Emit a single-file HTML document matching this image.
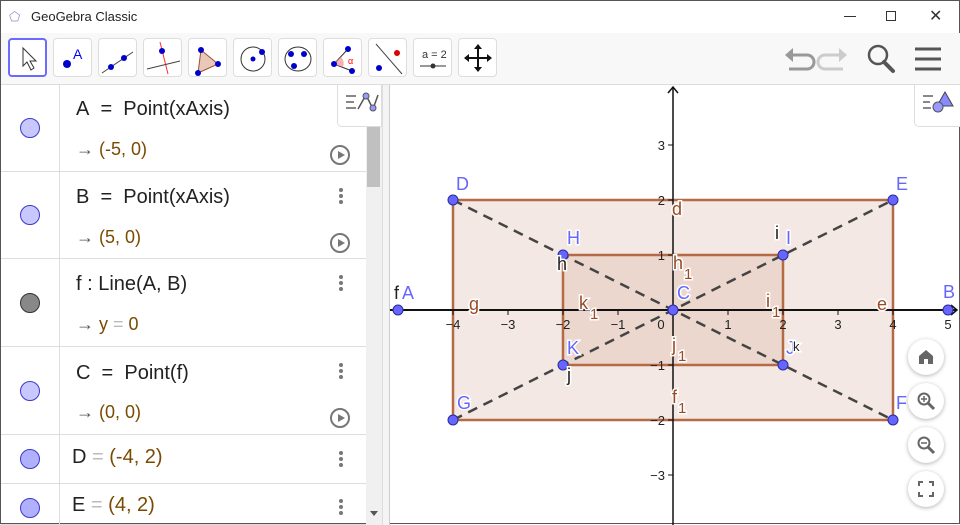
<!DOCTYPE html>
<html><head><meta charset="utf-8"><style>
*{margin:0;padding:0;box-sizing:border-box}
body{width:960px;height:524px;overflow:hidden;background:#fff;font-family:"Liberation Sans",sans-serif;position:relative;border:1px solid #555}
.abs{position:absolute}
.tb{left:0;top:32px;width:960px;height:52px;background:#f8f8f8;border-bottom:1px solid #ddd}
.btn{position:absolute;top:5px;width:39px;height:39px;background:#fff;border:1px solid #ddd;border-radius:4px}
.row{position:absolute;left:0;width:365px;border-bottom:1px solid #ddd}
.dot{position:absolute;left:19px;width:20px;height:20px;border-radius:50%;background:#c8c8ff;border:1px solid #3a3ac8}
.t{position:absolute;font-size:20px;color:#222;white-space:nowrap}
.o{color:#7a4a00}
.m{position:absolute;left:338px;width:4px;height:4px;border-radius:50%;background:#777;box-shadow:0 6px #777,0 12px #777}
.play{position:absolute;left:329px;width:20px;height:20px;border:2px solid #777;border-radius:50%}
.play:after{content:"";position:absolute;left:6px;top:4px;border-left:7px solid #777;border-top:4px solid transparent;border-bottom:4px solid transparent}
.rb{position:absolute;left:907px;width:36px;height:36px;border-radius:50%;background:#fff;box-shadow:0 1px 4px rgba(0,0,0,.3)}
</style></head><body>
<div class="abs" style="left:8px;top:8px;font-size:13px;color:#9090d0">⬠</div>
<div class="abs" style="left:30px;top:8px;font-size:13px;color:#222">GeoGebra Classic</div>
<div class="abs" style="left:843px;top:15px;width:12px;height:1px;background:#333"></div>
<div class="abs" style="left:885px;top:10px;width:10px;height:10px;border:1px solid #333"></div>
<div class="abs" style="left:928px;top:5px;font-size:16px;color:#333">✕</div>
<div class="abs tb">
<div class="btn" style="left:7px;border:2px solid #6b6bff"><svg width="35" height="35"><path d="M13 8 L13 26 L17 22 L21 30 L24 28 L20 21 L26 21 Z" fill="#fff" stroke="#333"/></svg></div>
<div class="btn" style="left:52px"><svg width="37" height="37"><circle cx="13" cy="25" r="4" fill="#00c"/><text x="19" y="20" font-size="14" fill="#00f" font-family="Liberation Sans">A</text></svg></div>
<div class="btn" style="left:97px"><svg width="37" height="37"><line x1="3" y1="34" x2="34" y2="13" stroke="#444"/><circle cx="12" cy="28" r="3" fill="#00c"/><circle cx="25" cy="19" r="3" fill="#00c"/></svg></div>
<div class="btn" style="left:142px"><svg width="37" height="37"><line x1="16" y1="3" x2="24" y2="35" stroke="#f33"/><line x1="3" y1="30" x2="36" y2="22" stroke="#444"/><circle cx="18" cy="12" r="3" fill="#00c"/></svg></div>
<div class="btn" style="left:187px"><svg width="37" height="37"><path d="M12 11 L29 25 L9 34 Z" fill="#e8c8b8" stroke="#a05030"/><circle cx="12" cy="11" r="3" fill="#00c"/><circle cx="29" cy="25" r="3" fill="#00c"/><circle cx="9" cy="34" r="3" fill="#00c"/></svg></div>
<div class="btn" style="left:232px"><svg width="37" height="37"><circle cx="19" cy="20" r="12" fill="none" stroke="#333"/><circle cx="19" cy="20" r="2.5" fill="#00c"/><circle cx="28" cy="13" r="3" fill="#00c"/></svg></div>
<div class="btn" style="left:277px"><svg width="37" height="37"><ellipse cx="19" cy="20" rx="13" ry="12" fill="none" stroke="#333"/><circle cx="12" cy="15" r="3" fill="#00c"/><circle cx="25" cy="15" r="3" fill="#00c"/><circle cx="15" cy="27" r="3" fill="#00c"/></svg></div>
<div class="btn" style="left:322px"><svg width="37" height="37"><path d="M10 25 L24 10 M10 25 L28 32" stroke="#333"/><path d="M10 25 L17 18 A9 9 0 0 1 19 28 Z" fill="#f8b0b0"/><circle cx="24" cy="10" r="3" fill="#00c"/><circle cx="10" cy="25" r="3" fill="#00c"/><circle cx="28" cy="32" r="3" fill="#00c"/><text x="24" y="25" font-size="9" fill="#f00">α</text></svg></div>
<div class="btn" style="left:367px"><svg width="37" height="37"><line x1="7" y1="5" x2="33" y2="35" stroke="#444"/><circle cx="28" cy="14" r="3" fill="#d00"/><circle cx="10" cy="29" r="3" fill="#00c"/></svg></div>
<div class="btn" style="left:412px"><svg width="37" height="37"><text x="8" y="19" font-size="11" fill="#333" font-family="Liberation Sans">a = 2</text><line x1="6" y1="27" x2="32" y2="27" stroke="#333"/><circle cx="19" cy="27" r="2.5" fill="#333"/></svg></div>
<div class="btn" style="left:457px"><svg width="37" height="37"><path d="M19 7 V31 M7 19 H31" stroke="#111" stroke-width="2"/><path d="M19 5 L15 10 H23Z M19 33 L15 28 H23Z M5 19 L10 15 V23Z M33 19 L28 15 V23Z" fill="#111"/></svg></div>
<svg class="abs" style="left:780px;top:10px" width="180" height="36"><path d="M8 12 H26 A7 7 0 0 1 26 26 H8" fill="none" stroke="#999" stroke-width="3"/><path d="M4 12 L12 5 V19Z" fill="#999"/><path d="M62 12 H44 A7 7 0 0 0 44 26 H62" fill="none" stroke="#ccc" stroke-width="3"/><path d="M66 12 L58 5 V19Z" fill="#ccc"/><circle cx="97" cy="12" r="9" fill="none" stroke="#555" stroke-width="2.5"/><line x1="103" y1="19" x2="112" y2="28" stroke="#555" stroke-width="4" stroke-linecap="round"/><path d="M134 6 H160 M134 16 H160 M134 26 H160" stroke="#555" stroke-width="3"/></svg>
</div>
<!-- algebra -->
<div class="abs" style="left:58px;top:84px;width:1px;height:440px;background:#ddd"></div>
<div class="row" style="top:84px;height:87px"><div class="dot" style="top:33px"></div><div class="t" style="left:75px;top:13px">A&nbsp; =&nbsp; Point(xAxis)</div><div class="t" style="left:75px;top:54px;font-size:18px"><span style="color:#555">→</span> <span class="o">(-5, 0)</span></div><div class="play" style="top:60px"></div></div>
<div class="row" style="top:171px;height:87px"><div class="dot" style="top:33px"></div><div class="t" style="left:75px;top:14px">B&nbsp; =&nbsp; Point(xAxis)</div><div class="m" style="top:16px"></div><div class="t" style="left:75px;top:55px;font-size:18px"><span style="color:#555">→</span> <span class="o">(5, 0)</span></div><div class="play" style="top:61px"></div></div>
<div class="row" style="top:258px;height:88px"><div class="dot" style="top:34px;background:#888;border-color:#333"></div><div class="t" style="left:75px;top:14px">f : Line(A, B)</div><div class="m" style="top:16px"></div><div class="t" style="left:75px;top:55px;font-size:18px"><span style="color:#555">→</span> <span class="o">y <span style="color:#bbb">=</span> 0</span></div></div>
<div class="row" style="top:346px;height:88px"><div class="dot" style="top:34px"></div><div class="t" style="left:75px;top:15px">C&nbsp; =&nbsp; Point(f)</div><div class="m" style="top:16px"></div><div class="t" style="left:75px;top:55px;font-size:18px"><span style="color:#555">→</span> <span class="o">(0, 0)</span></div><div class="play" style="top:61px"></div></div>
<div class="row" style="top:434px;height:49px"><div class="dot" style="top:14px;background:#b0b0ff"></div><div class="t" style="left:71px;top:11px">D <span style="color:#bbb">=</span> <span class="o">(-4, 2)</span></div><div class="m" style="top:16px"></div></div>
<div class="row" style="top:483px;height:41px"><div class="dot" style="top:14px;background:#b0b0ff"></div><div class="t" style="left:71px;top:10px">E <span style="color:#bbb">=</span> <span class="o">(4, 2)</span></div><div class="m" style="top:15px"></div></div>
<div class="abs" style="left:365px;top:84px;width:16px;height:440px;background:#f0f0f0"></div>
<div class="abs" style="left:366px;top:126px;width:13px;height:60px;background:#c0c0c0"></div>
<div class="abs" style="left:369px;top:510px;border-top:5px solid #555;border-left:4px solid transparent;border-right:4px solid transparent"></div>
<div class="abs" style="left:336px;top:84px;width:45px;height:42px;background:#fff;border:1px solid #ddd;border-top:none;border-radius:0 0 0 5px"><svg width="45" height="42"><path d="M8 11 H18 M8 17 H16 M8 23 H18" stroke="#888" stroke-width="2"/><path d="M20 24 L28 10 L35 24 L40 10" fill="none" stroke="#555" stroke-width="1.5"/><circle cx="28" cy="11" r="3" fill="#9999ff" stroke="#555"/><circle cx="35" cy="23" r="3" fill="#9999ff" stroke="#555"/></svg></div>
<div class="abs" style="left:381px;top:84px;width:8px;height:440px;background:#f4f4f4;border-left:1px solid #ddd;border-right:1px solid #ccc"></div>
<!-- graphics -->
<svg class="abs" style="left:389px;top:84px" width="571" height="440" viewBox="389 84 571 440" font-family="Liberation Sans">
<rect x="452" y="199" width="440" height="220" fill="#f3e8e3" stroke="#b46a45" stroke-width="2.5"/>
<rect x="562" y="254" width="220" height="110" fill="#ebd7cd" stroke="#b46a45" stroke-width="2.5"/>
<g stroke="#444" stroke-width="2.5" stroke-dasharray="10,7"><line x1="452" y1="199" x2="892" y2="419"/><line x1="452" y1="419" x2="892" y2="199"/></g>
<line x1="389" y1="309" x2="955" y2="309" stroke="#111" stroke-width="2"/>
<path d="M950 304 L956 309 L950 314" fill="none" stroke="#111" stroke-width="1.5"/>
<line x1="672" y1="86" x2="672" y2="524" stroke="#111" stroke-width="1.5"/>
<path d="M667 92 L672 86 L677 92" fill="none" stroke="#111" stroke-width="1.5"/>
<g stroke="#111"><path d="M452 309v5M507 309v5M562 309v5M617 309v5M727 309v5M782 309v5M837 309v5M892 309v5M947 309v5M667 144h5M667 199h5M667 254h5M667 364h5M667 419h5M667 474h5"/></g>
<g font-size="13" fill="#222" text-anchor="middle"><text x="452" y="328">−4</text><text x="507" y="328">−3</text><text x="562" y="328">−2</text><text x="617" y="328">−1</text><text x="660" y="328">0</text><text x="727" y="328">1</text><text x="782" y="328">2</text><text x="837" y="328">3</text><text x="892" y="328">4</text><text x="947" y="328">5</text></g>
<g font-size="13" fill="#222" text-anchor="end"><text x="664" y="149">3</text><text x="664" y="204">2</text><text x="664" y="259">1</text><text x="664" y="369">−1</text><text x="664" y="424">−2</text><text x="664" y="479">−3</text></g>
<g fill="#6666ff" stroke="#2a2a99" stroke-width="1"><circle cx="397" cy="309" r="5"/><circle cx="947" cy="309" r="5"/><circle cx="672" cy="309" r="5"/><circle cx="452" cy="199" r="5"/><circle cx="892" cy="199" r="5"/><circle cx="892" cy="419" r="5"/><circle cx="452" cy="419" r="5"/><circle cx="562" cy="254" r="5"/><circle cx="782" cy="254" r="5"/><circle cx="782" cy="364" r="5"/><circle cx="562" cy="364" r="5"/></g>
<g font-size="18" stroke="#fff" stroke-width="3" paint-order="stroke">
<g fill="#6666ff"><text x="455" y="189">D</text><text x="895" y="189">E</text><text x="456" y="408">G</text><text x="895" y="408">F</text><text x="566" y="243">H</text><text x="785" y="243">I</text><text x="676" y="298">C</text><text x="401" y="298">A</text><text x="942" y="297">B</text><text x="566" y="353">K</text><text x="785" y="353">J</text></g>
<g fill="#222"><text x="393" y="298">f</text><text x="556" y="269">h</text><text x="774" y="238">i</text><text x="566" y="380">j</text><text x="792" y="350" font-size="13">k</text></g>
<g fill="#9a4a25"><text x="671" y="214">d</text><text x="468" y="309">g</text><text x="876" y="309">e</text><text x="672" y="268">h</text><text x="683" y="278" font-size="15">1</text><text x="578" y="308">k</text><text x="589" y="318" font-size="15">1</text><text x="765" y="306">i</text><text x="771" y="316" font-size="15">1</text><text x="671" y="350">j</text><text x="677" y="360" font-size="15">1</text><text x="671" y="402">f</text><text x="677" y="412" font-size="15">1</text></g>
</g>
</svg>
<div class="abs" style="left:913px;top:84px;width:47px;height:42px;background:#fff;border:1px solid #ddd;border-top:none;border-right:none;border-radius:0 0 0 5px"><svg width="47" height="42"><path d="M8 11 H18 M8 17 H15 M8 23 H16" stroke="#888" stroke-width="2"/><path d="M30 7 L22 21 H38Z" fill="#8a8aff" stroke="#444"/><circle cx="23" cy="22" r="5" fill="#9999ff" stroke="#555"/></svg></div>
<div class="rb" style="top:338px"><svg width="36" height="36"><path d="M18 11 L11 17 V25 H16 V20 H20 V25 H25 V17Z" fill="#666"/></svg></div>
<div class="rb" style="top:382px"><svg width="36" height="36"><circle cx="16" cy="16" r="5.5" fill="none" stroke="#666" stroke-width="2"/><path d="M20 20 L26 26" stroke="#666" stroke-width="3"/><path d="M13 16h6M16 13v6" stroke="#666" stroke-width="1.5"/></svg></div>
<div class="rb" style="top:426px"><svg width="36" height="36"><circle cx="16" cy="16" r="5.5" fill="none" stroke="#666" stroke-width="2"/><path d="M20 20 L26 26" stroke="#666" stroke-width="3"/><path d="M13 16h6" stroke="#666" stroke-width="1.5"/></svg></div>
<div class="rb" style="top:470px"><svg width="36" height="36"><path d="M11 15V11H15M21 11H25V15M25 21V25H21M15 25H11V21" fill="none" stroke="#666" stroke-width="2"/></svg></div>
</body></html>
